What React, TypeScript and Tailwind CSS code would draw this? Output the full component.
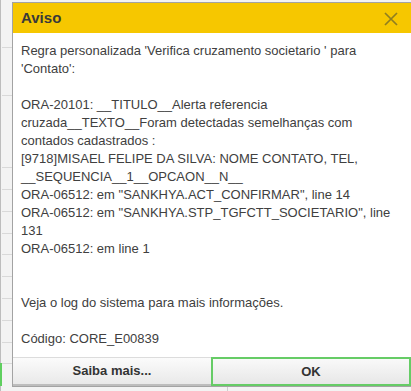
export default function App() {
  const rowLines = [47, 95, 167, 189, 211, 233, 254, 276, 298, 320, 342, 363];

  const lines = [
    "Regra personalizada 'Verifica cruzamento societario ' para 'Contato':",
    '',
    'ORA-20101: __TITULO__Alerta referencia cruzada__TEXTO__Foram detectadas semelhanças com contados cadastrados :',
    '[9718]MISAEL FELIPE DA SILVA: NOME CONTATO, TEL, __SEQUENCIA__1__OPCAON__N__',
    'ORA-06512: em "SANKHYA.ACT_CONFIRMAR", line 14',
    'ORA-06512: em "SANKHYA.STP_TGFCTT_SOCIETARIO", line 131',
    'ORA-06512: em line 1',
    '',
    '',
    'Veja o log do sistema para mais informações.',
    '',
    'Código: CORE_E00839',
  ];

  return (
    <div className="relative w-[411px] h-[391px] overflow-hidden bg-[#f3f3f3] font-['Liberation_Sans',Arial,sans-serif]">
      {/* background grid behind the modal */}
      <div className="absolute left-0 top-0 h-full w-px bg-[#bdbdbd]" />
      {rowLines.map((y) => (
        <div key={y} className="absolute left-[2px] w-[10px] h-px bg-[#d9d9d9]" style={{ top: y }} />
      ))}
      <div className="absolute left-0 top-[363px] w-[2px] h-[23px] bg-[#5fcf5f]" />
      <div className="absolute left-[227px] top-[386px] w-px h-[5px] bg-[#cfcfcf]" />

      {/* dialog */}
      <div className="absolute left-[12px] top-[2px] w-[400px] h-[385px] flex flex-col border border-[#a3a3a3] bg-white">
        <div className="h-[30px] shrink-0 bg-[#f6c700] flex items-center justify-between pl-[8px] pr-[13px]">
          <span className="text-[15px] font-bold text-[#3a3a3a]">Aviso</span>
          <svg width="14" height="14" viewBox="0 0 14 14" className="mt-[1px]">
            <path d="M1 1L13 13M13 1L1 13" stroke="#8f7f20" strokeWidth="1.7" />
          </svg>
        </div>

        <div className="flex-1 pt-[9px] pl-[8px] pr-[14px] text-[13px] leading-[18px] text-[#404040]">
          {lines.map((t, i) => (
            <div key={i} className="min-h-[18px]">
              {t}
            </div>
          ))}
        </div>

        <div className="h-[29px] shrink-0 flex">
          <button className="w-[198px] h-full border-t border-[#dcdcdc] border-b-2 border-b-[#bdbdbd] bg-gradient-to-b from-[#fbfbfb] to-[#e9e9e9] text-[13px] font-bold text-[#333]">
            Saiba mais...
          </button>
          <button className="flex-1 h-full border-2 border-[#66cc66] bg-gradient-to-b from-[#f9f9f9] to-[#e7e7e7] text-[13px] font-bold text-[#333]">
            OK
          </button>
        </div>
      </div>
    </div>
  );
}
